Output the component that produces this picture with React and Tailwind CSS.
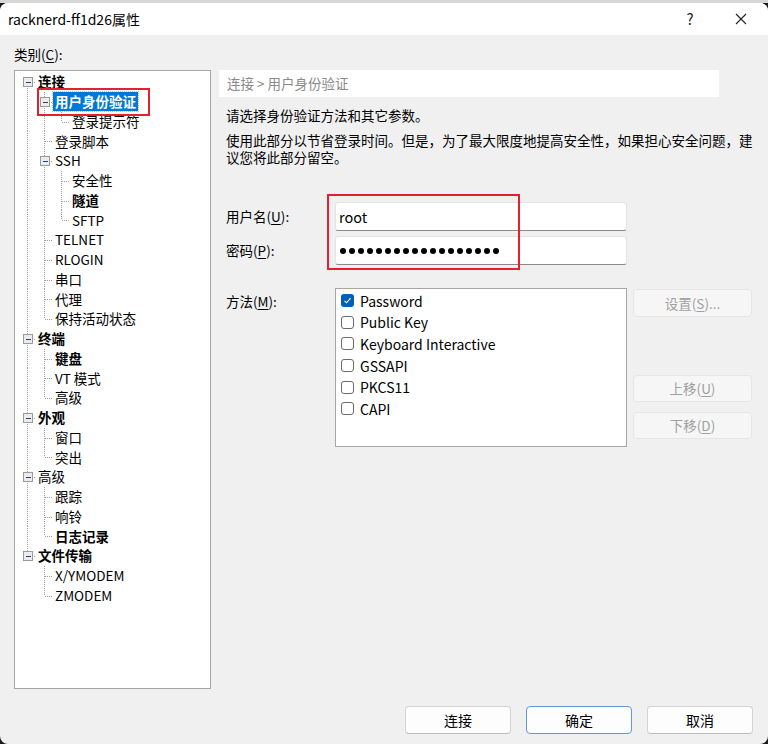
import React from 'react'

const FONT = { fontFamily: '"Noto Sans CJK SC", "Noto Sans", sans-serif' }

// tree rows: d = depth, b = bold, k = has children (expanded)
const tree = [
  { t: '连接', d: 0, b: 1, k: 1 },
  { t: '用户身份验证', d: 1, b: 1, k: 1, sel: 1 },
  { t: '登录提示符', d: 2 },
  { t: '登录脚本', d: 1 },
  { t: 'SSH', d: 1, k: 1 },
  { t: '安全性', d: 2 },
  { t: '隧道', d: 2, b: 1 },
  { t: 'SFTP', d: 2 },
  { t: 'TELNET', d: 1 },
  { t: 'RLOGIN', d: 1 },
  { t: '串口', d: 1 },
  { t: '代理', d: 1 },
  { t: '保持活动状态', d: 1 },
  { t: '终端', d: 0, b: 1, k: 1 },
  { t: '键盘', d: 1, b: 1 },
  { t: 'VT 模式', d: 1 },
  { t: '高级', d: 1 },
  { t: '外观', d: 0, b: 1, k: 1 },
  { t: '窗口', d: 1 },
  { t: '突出', d: 1 },
  { t: '高级', d: 0, k: 1 },
  { t: '跟踪', d: 1 },
  { t: '响铃', d: 1 },
  { t: '日志记录', d: 1, b: 1 },
  { t: '文件传输', d: 0, b: 1, k: 1 },
  { t: 'X/YMODEM', d: 1 },
  { t: 'ZMODEM', d: 1 },
]

const ROW = 19.75

function hasNext(i) {
  const d = tree[i].d
  for (let j = i + 1; j < tree.length; j++) {
    if (tree[j].d < d) return false
    if (tree[j].d === d) return true
  }
  return false
}

function ancestor(i, k) {
  for (let j = i - 1; j >= 0; j--) if (tree[j].d === k) return j
  return -1
}

function TreeLines({ i }) {
  const { d, k } = tree[i]
  const w = 21 + 17 * d
  const mid = ROW / 2
  const lx = l => 12.5 + 17 * l
  const dash = { stroke: '#a0a0a0', strokeWidth: 1, strokeDasharray: '1 1' }
  const x = lx(d)
  return (
    <svg width={w} height={ROW} className="shrink-0" shapeRendering="crispEdges">
      {Array.from({ length: d }).map((_, l) =>
        hasNext(ancestor(i, l)) ? <line key={l} x1={lx(l)} y1={0} x2={lx(l)} y2={ROW} {...dash} /> : null
      )}
      {i !== 0 && <line x1={x} y1={0} x2={x} y2={mid} {...dash} />}
      {hasNext(i) && <line x1={x} y1={mid} x2={x} y2={ROW} {...dash} />}
      <line x1={x} y1={mid + 0.5} x2={w} y2={mid + 0.5} {...dash} />
      {k && (
        <g>
          <rect x={x - 4.5} y={mid - 4} width={9} height={9} fill="#ececec" stroke="#9a9a9a" />
          <line x1={x - 2} y1={mid + 0.5} x2={x + 3} y2={mid + 0.5} stroke="#2c3e78" />
        </g>
      )}
    </svg>
  )
}

function Mn({ children }) {
  return <span className="underline underline-offset-2">{children}</span>
}

const methods = ['Password', 'Public Key', 'Keyboard Interactive', 'GSSAPI', 'PKCS11', 'CAPI']

export default function App() {
  return (
    <div className="w-[768px] h-[744px] flex flex-col bg-[#1a1a1a] overflow-hidden" style={FONT}>
      <div className="h-[3px] bg-[#d6d6d6] shrink-0" />
      <div className="flex-1 flex flex-col bg-[#f0f0f0] rounded-t-[8px] rounded-b-[8px] overflow-hidden">
        {/* title bar */}
        <div className="h-[32px] bg-white flex items-center shrink-0">
          <div className="pl-[8px] text-[14px] text-black leading-none">racknerd-ff1d26属性</div>
          <div className="ml-auto flex items-center h-full mr-[4px]">
            <div className="w-[46px] h-full flex items-center justify-center text-[15px] text-[#222]">?</div>
            <div className="w-[46px] h-full flex items-center justify-center ml-[5px]">
              <svg width="12" height="12" viewBox="0 0 12 12">
                <path d="M1 1 L11 11 M11 1 L1 11" stroke="#222" strokeWidth="1.1" />
              </svg>
            </div>
          </div>
        </div>

        {/* body */}
        <div className="flex flex-col pl-[14px]">
          <div className="flex">
            {/* left: category tree */}
            <div className="w-[197px] shrink-0">
              <div className="h-[35px] pt-[10px] text-[13.5px] leading-[18px] text-black">
                类别(<Mn>C</Mn>):
              </div>
              <div className="relative h-[619px] bg-white border border-[#a6a6a6]">
                <div className="pt-[1px]">
                  {tree.map((r, i) => (
                    <div key={i} className="flex items-center" style={{ height: ROW }}>
                      <TreeLines i={i} />
                      <span
                        className={
                          'px-[2px] h-[19px] leading-[19px] text-[13.5px] whitespace-nowrap ' +
                          (r.b ? 'font-bold ' : '') +
                          (r.sel ? 'bg-[#0078d7] text-white outline-1 outline-dotted outline-[#9ec8f0]' : 'text-black')
                        }
                      >
                        {r.t}
                      </span>
                    </div>
                  ))}
                </div>
                {/* annotation box */}
                <div className="absolute left-[22px] top-[17px] w-[113px] h-[28px] border-[2.5px] border-[#e5202e]" />
              </div>
            </div>

            {/* right: auth settings */}
            <div className="ml-[8px] w-[534px] pt-[35px]">
              <div className="w-[500px] h-[27px] bg-white pl-[8px] text-[13.5px] leading-[27px] text-[#8a8a8a]">
                连接 &gt; 用户身份验证
              </div>
              <div className="pl-[7px] text-[13.5px] text-black">
                <div className="mt-[10px] leading-[17px]">请选择身份验证方法和其它参数。</div>
                <div className="mt-[8px] leading-[17px] whitespace-nowrap">
                  <div>使用此部分以节省登录时间。但是，为了最大限度地提高安全性，如果担心安全问题，建</div>
                  <div>议您将此部分留空。</div>
                </div>

                <div className="relative mt-[36px]">
                  <div className="flex items-center">
                    <div className="w-[109px] leading-[29px]">
                      用户名(<Mn>U</Mn>):
                    </div>
                    <div className="w-[292px] h-[29px] bg-white border border-[#e3e3e3] border-b-[#8a8a8a] rounded-[3px] pl-[3px] text-[14.5px] leading-[27px]">
                      root
                    </div>
                  </div>
                  <div className="flex items-center mt-[5px]">
                    <div className="w-[109px] leading-[29px]">
                      密码(<Mn>P</Mn>):
                    </div>
                    <div className="w-[292px] h-[29px] bg-white border border-[#e3e3e3] border-b-[#8a8a8a] rounded-[3px] pl-[4px] flex items-center gap-[3px]">
                      {Array.from({ length: 18 }).map((_, i) => (
                        <span key={i} className="w-[6px] h-[6px] rounded-full bg-black" />
                      ))}
                    </div>
                  </div>
                  {/* annotation box */}
                  <div className="absolute left-[101px] top-[-8px] w-[193px] h-[76px] border-[2.5px] border-[#e5202e]" />
                </div>

                <div className="flex mt-[23px]">
                  <div className="w-[109px] pt-[4.5px] leading-[17px]">
                    方法(<Mn>M</Mn>):
                  </div>
                  <div className="w-[292px] h-[159px] bg-white border border-[#a6a6a6] pt-[1px]">
                    {methods.map((m, i) => (
                      <div key={m} className="h-[21.6px] flex items-center pl-[5px]">
                        {i === 0 ? (
                          <span className="w-[13px] h-[13px] rounded-[3px] bg-[#005fb8] flex items-center justify-center">
                            <svg width="9" height="9" viewBox="0 0 9 9">
                              <path d="M1.5 4.8 L3.6 6.8 L7.6 2.2" fill="none" stroke="white" strokeWidth="1.1" />
                            </svg>
                          </span>
                        ) : (
                          <span className="w-[13px] h-[13px] rounded-[3px] border border-[#6b6b6b] bg-white" />
                        )}
                        <span className="ml-[6px] text-[14px] leading-[18px]">{m}</span>
                      </div>
                    ))}
                  </div>
                  <div className="ml-[6px] w-[119px] flex flex-col text-[13.5px] text-[#a0a0a0]">
                    <div className="mt-[1px] h-[28px] rounded-[4px] bg-[#f6f6f6] border border-[#e6e6e6] flex items-center justify-center">
                      设置(<Mn>S</Mn>)...
                    </div>
                    <div className="mt-[58px] h-[27px] rounded-[4px] bg-[#f6f6f6] border border-[#e6e6e6] flex items-center justify-center">
                      上移(<Mn>U</Mn>)
                    </div>
                    <div className="mt-[10px] h-[27px] rounded-[4px] bg-[#f6f6f6] border border-[#e6e6e6] flex items-center justify-center">
                      下移(<Mn>D</Mn>)
                    </div>
                  </div>
                </div>
              </div>
            </div>
          </div>

          {/* footer */}
          <div className="mt-[17px] flex justify-end gap-[15px] pr-[15px] text-[14px] text-black">
            <div className="w-[106px] h-[28px] bg-[#fdfdfd] border border-[#d3d3d3] border-b-[#bcbcbc] rounded-[4px] flex items-center justify-center">
              连接
            </div>
            <div className="w-[106px] h-[28px] bg-[#fdfdfd] border border-[#5a9ad8] rounded-[4px] flex items-center justify-center">
              确定
            </div>
            <div className="w-[106px] h-[28px] bg-[#fdfdfd] border border-[#d3d3d3] border-b-[#bcbcbc] rounded-[4px] flex items-center justify-center">
              取消
            </div>
          </div>
        </div>
      </div>
    </div>
  )
}
